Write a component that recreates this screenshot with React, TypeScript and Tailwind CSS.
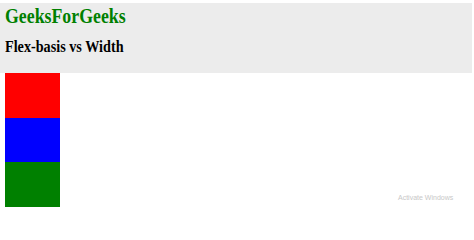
import React from 'react';

const serif = { fontFamily: '"Liberation Serif", "Times New Roman", serif' };

export default function App() {
  return (
    <div className="relative w-[474px] h-[207px] overflow-hidden bg-white" style={serif}>
      {/* header */}
      <div className="mt-[3px] mr-[2px] h-[70px] bg-[#ececec] pl-[5px] pt-[1px]">
        <h1 className="inline-block origin-left scale-x-[0.89] text-[20px] leading-[24px] font-bold text-[#008000]">
          GeeksForGeeks
        </h1>
        <h3 className="mt-[7px] origin-left scale-x-[0.86] text-[16.5px] leading-[20px] font-bold text-black">
          Flex-basis vs Width
        </h3>
      </div>
      {/* boxes */}
      <div className="flex flex-col pl-[5px]">
        <div className="w-[55px] h-[45px] bg-[#ff0000]" />
        <div className="w-[55px] h-[44px] bg-[#0000ff]" />
        <div className="w-[55px] h-[45px] bg-[#008000]" />
      </div>
      {/* faint OS watermark */}
      <div
        className="absolute left-[398px] top-[194px] text-[7px] leading-[8px] text-[#c8c8c8]"
        style={{ fontFamily: '"Liberation Sans", Arial, sans-serif' }}
      >
        Activate Windows
      </div>
    </div>
  );
}
